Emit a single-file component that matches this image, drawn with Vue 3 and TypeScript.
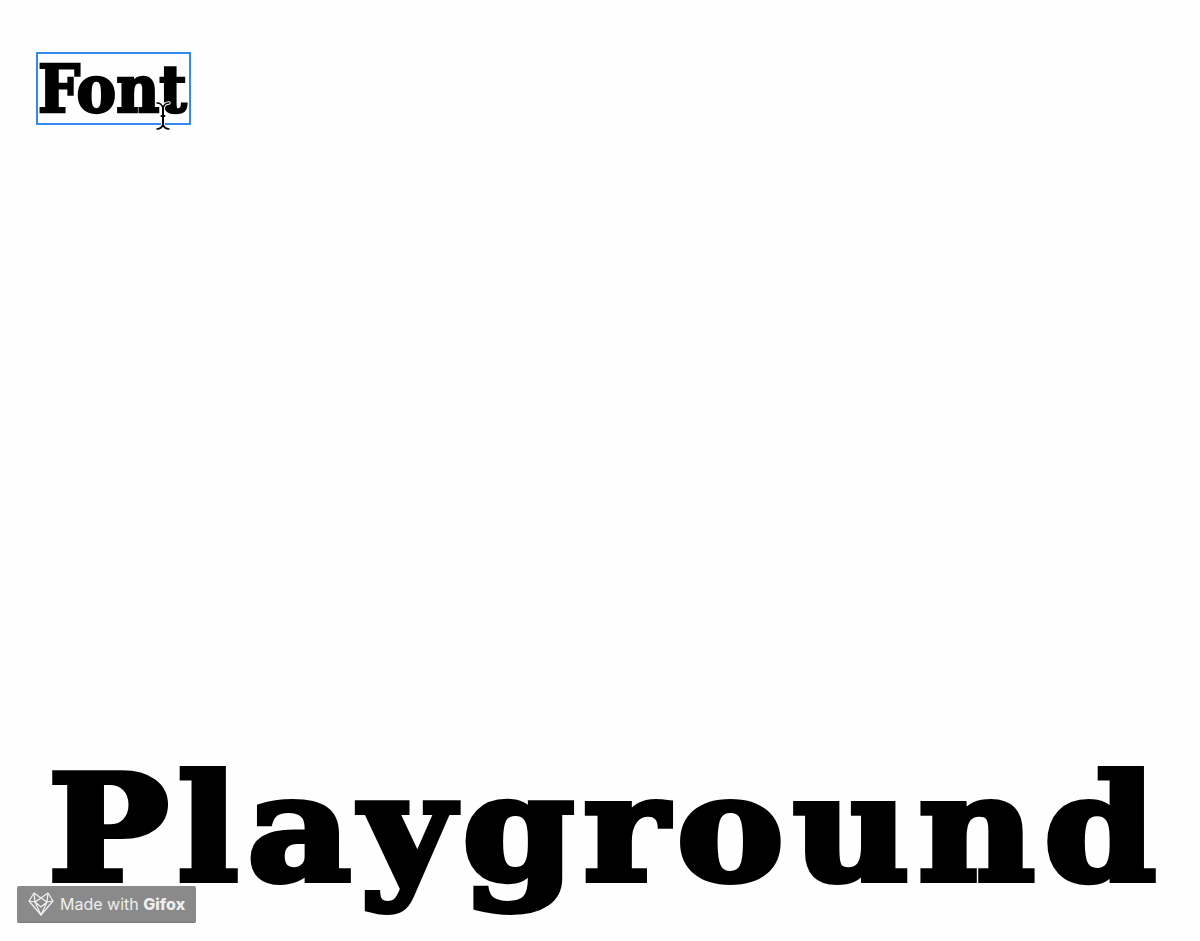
<script setup lang="ts">
</script>

<template>
  <main class="page">
    <div class="font-box">
      <span class="font-word">Font</span>
      <svg class="cursor" viewBox="0 0 16 30" width="16" height="30" fill="none" stroke-linecap="round">
        <path class="halo" d="M2 2 C4 2 7 3 8 7 C9 3 12 2 14 2 M8 7 V23 M2 28 C4 28 7 27 8 23 C9 27 12 28 14 28" />
        <path class="beam" d="M2 2 C4 2 7 3 8 7 C9 3 12 2 14 2" />
        <path class="stem" d="M8 7 V23 M6.5 15 H9.5" />
        <path class="beam" d="M2 28 C4 28 7 27 8 23 C9 27 12 28 14 28" />
      </svg>
    </div>
    <h1 class="headline">Playground</h1>
    <div class="badge">
      <svg class="fox" viewBox="0 0 26 24" width="26" height="24" fill="none" stroke="#f2f2f2" stroke-width="1.2" stroke-linejoin="round">
        <path d="M1 9 L6 1 L13 6 L20 1 L25 9 L13 23 Z" />
        <path d="M6 1 L7 10 L13 6 L19 10 L20 1 M1 9 L7 10 L13 23 L19 10 L25 9 M7 10 L13 15 L19 10" />
      </svg>
      <span class="badge-text">Made with <b>Gifox</b></span>
    </div>
  </main>
</template>

<style scoped>
.page {
  height: 941px;
  box-sizing: border-box;
  background: #fefefe;
  display: flex;
  flex-direction: column;
  justify-content: space-between;
  padding: 52px 0 39px 36px;
  position: relative;
  overflow: hidden;
}
.font-box {
  align-self: flex-start;
  position: relative;
  border: 2px solid #3389f0;
  height: 73px;
  width: 155px;
  box-sizing: border-box;
  display: flex;
  align-items: center;
}
.font-word {
  font-family: "DejaVu Serif Condensed", "DejaVu Serif", serif;
  font-stretch: condensed;
  font-weight: 700;
  font-size: 66px;
  color: #000;
  line-height: 1;
  white-space: nowrap;
  -webkit-text-stroke: 2.4px #000;
}
.cursor {
  position: absolute;
  left: 117px;
  top: 47px;
}
.halo {
  stroke: #fff;
  stroke-width: 3.5;
}
.beam {
  stroke: #000;
  stroke-width: 1.6;
}
.stem {
  stroke: #000;
  stroke-width: 2;
}
.headline {
  margin: 0 0 0 12px;
  font-family: "DejaVu Serif", serif;
  font-weight: 700;
  font-size: 146px;
  line-height: 1;
  color: #000;
  white-space: nowrap;
  letter-spacing: 8px;
  -webkit-text-stroke: 6px #000;
  transform: scaleX(1.1);
  transform-origin: left center;
}
.badge {
  position: absolute;
  left: 17px;
  top: 886px;
  width: 179px;
  height: 37px;
  background: #8a8a8a;
  border-bottom: 1px solid #777;
  display: flex;
  align-items: center;
  gap: 6px;
  padding-left: 11px;
  box-sizing: border-box;
  border-radius: 2px;
}
.badge-text {
  font-family: Inter, sans-serif;
  font-size: 16px;
  color: #eee;
  white-space: nowrap;
}
.badge-text b {
  font-weight: 800;
}
</style>
